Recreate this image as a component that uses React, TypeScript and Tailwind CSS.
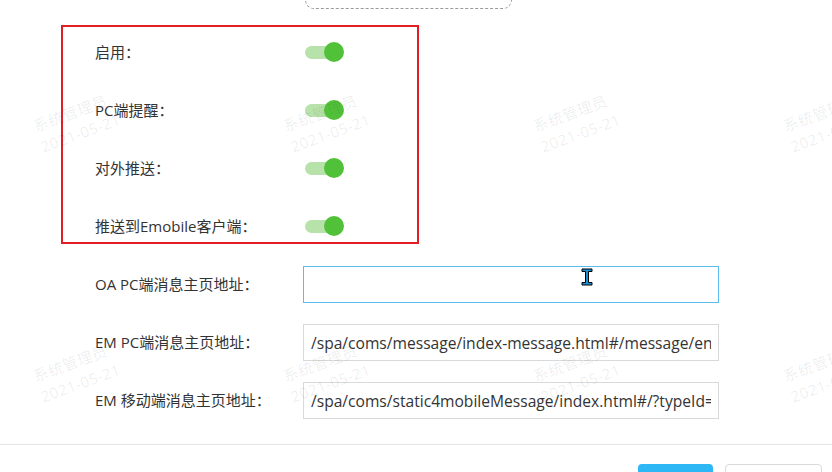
import React from "react";

const FONT = "font-['Open_Sans','Noto_Sans_CJK_SC',sans-serif]";

function Switch() {
  return (
    <div className="relative w-[39px] h-[20px] flex items-center">
      <div className="w-[35px] h-[13px] rounded-full bg-[#b7e2a9]" />
      <div className="absolute right-0 top-0 w-[20px] h-[20px] rounded-full bg-[#52c13a]" />
    </div>
  );
}

const switches = ["启用：", "PC端提醒：", "对外推送：", "推送到Emobile客户端："];

const inputs = [
  { label: "OA PC端消息主页地址：", value: "", focus: true },
  { label: "EM PC端消息主页地址：", value: "/spa/coms/message/index-message.html#/message/entry?typeId=", focus: false },
  { label: "EM 移动端消息主页地址：", value: "/spa/coms/static4mobileMessage/index.html#/?typeId=", focus: false },
];

const wmLefts = [30, 280, 530, 780];
const wmTops = [-134, 116, 366];

export default function App() {
  return (
    <div className={`relative w-[832px] min-h-[472px] overflow-hidden bg-white text-[#333] ${FONT}`}>
      <div className="ml-[305px] w-[207px] h-[40px] -mt-[31px] border border-dashed border-[#9a9a9a] rounded-[9px]" />

      <div className="mt-[16px] ml-[61px] w-[358px] h-[219px] border-2 border-[#e41e26] pt-[10px] pl-[32px] flex flex-col gap-[28px]">
        {switches.map((s) => (
          <div key={s} className="h-[30px] flex items-center">
            <div className="w-[210px] text-[15px]">{s}</div>
            <Switch />
          </div>
        ))}
      </div>

      <div className="mt-[22px] flex flex-col gap-[21px]">
        {inputs.map((r) => (
          <div key={r.label} className="h-[37px] flex items-center">
            <div className="ml-[95px] w-[208px] text-[15px]">{r.label}</div>
            <input
              readOnly
              value={r.value}
              className={`w-[416px] h-[37px] px-[7px] text-[15.6px] text-[#333] bg-white outline-none border ${
                r.focus ? "border-[#5cbcf0]" : "border-[#d9d9d9]"
              } ${FONT}`}
            />
          </div>
        ))}
      </div>

      <div className="mt-[25px] h-px bg-[#e6e6e6]" />

      <div className="mt-[19px] pr-[10px] flex justify-end gap-[12px]">
        <button className="w-[75px] h-[32px] rounded-[4px] bg-[#2db7f5] text-white text-[14px]">保存</button>
        <button className="w-[97px] h-[32px] rounded-[4px] border border-[#d9d9d9] bg-white text-[14px] text-[#333]">取消</button>
      </div>

      <svg
        className="absolute left-[581px] top-[268px]"
        width="12"
        height="18"
        viewBox="0 0 12 18"
      >
        <polygon
          points="1,1 11,1 11,3.5 7.5,3.5 7.5,14.5 11,14.5 11,17 1,17 1,14.5 4.5,14.5 4.5,3.5 1,3.5"
          fill="#1b8fcf"
          stroke="#000"
          strokeWidth="1"
        />
      </svg>

      <div className="pointer-events-none absolute inset-0">
        {wmTops.map((t) =>
          wmLefts.map((l) => (
            <div
              key={`${l}-${t}`}
              className="absolute origin-top-left -rotate-[20deg] text-[15px] leading-[22px] text-[rgba(0,0,0,0.08)] whitespace-nowrap tracking-[0.5px]"
              style={{ left: l, top: t }}
            >
              <div>系统管理员</div>
              <div>2021-05-21</div>
            </div>
          ))
        )}
      </div>
    </div>
  );
}
